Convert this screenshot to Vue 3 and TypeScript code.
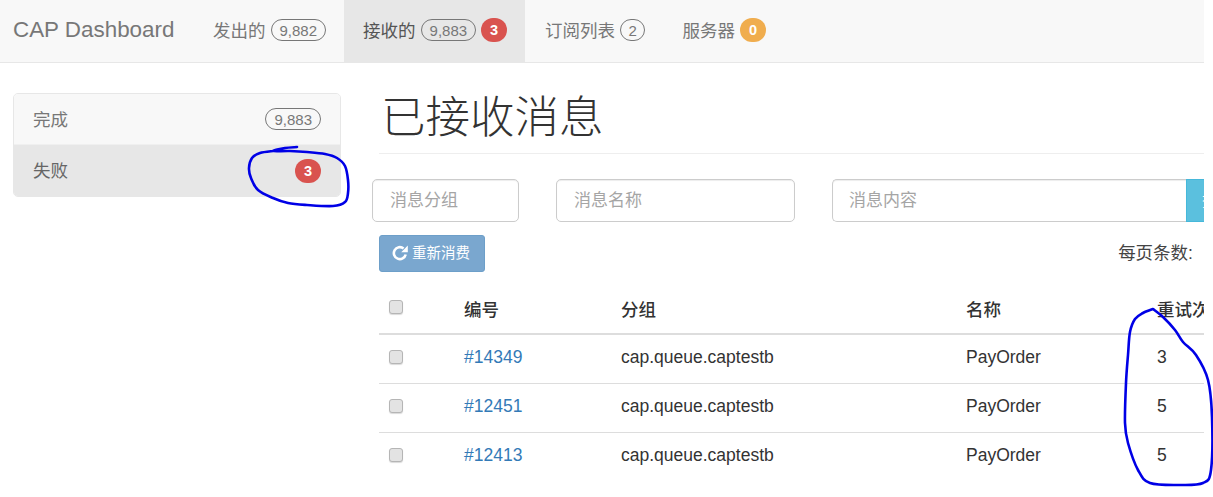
<script setup lang="ts">
interface Row { id: string; group: string; name: string; retries: number }
type Point = [number, number]

const rows: Row[] = [
  { id: '#14349', group: 'cap.queue.captestb', name: 'PayOrder', retries: 3 },
  { id: '#12451', group: 'cap.queue.captestb', name: 'PayOrder', retries: 5 },
  { id: '#12413', group: 'cap.queue.captestb', name: 'PayOrder', retries: 5 },
]

// Catmull-Rom through the sampled points of a hand-drawn stroke
function smooth(p: Point[]): string {
  let d = `M${p[0][0]} ${p[0][1]}`
  for (let i = 0; i < p.length - 1; i++) {
    const a = p[Math.max(i - 1, 0)]
    const b = p[i]
    const c = p[i + 1]
    const e = p[Math.min(i + 2, p.length - 1)]
    const x1 = (b[0] + (c[0] - a[0]) / 6).toFixed(1)
    const y1 = (b[1] + (c[1] - a[1]) / 6).toFixed(1)
    const x2 = (c[0] - (e[0] - b[0]) / 6).toFixed(1)
    const y2 = (c[1] - (e[1] - b[1]) / 6).toFixed(1)
    d += ` C${x1} ${y1} ${x2} ${y2} ${c[0]} ${c[1]}`
  }
  return d
}

const sideLoop = smooth([
  [297, 147], [285, 148], [273, 151], [290, 151], [307, 152], [325, 154], [337, 158], [345, 166],
  [348, 180], [348, 193], [345, 202], [333, 206], [307, 205], [288, 203], [273, 198], [258, 190],
  [251, 178], [249, 168], [252, 158], [260, 153], [273, 151],
])
const retryLoop = smooth([
  [1153, 309], [1143, 313], [1135, 319], [1130, 332], [1128, 355], [1126, 383], [1125, 423],
  [1128, 443], [1138, 470], [1150, 483], [1180, 485], [1203, 483], [1211, 470], [1212, 417],
  [1208, 380], [1196, 355], [1183, 342], [1175, 330], [1163, 317], [1153, 309],
])
</script>

<template>
  <div class="page">
    <nav class="navbar">
      <span class="brand">CAP Dashboard</span>
      <a class="nav-item first"><span class="label">发出的</span><span class="pill">9,882</span></a>
      <a class="nav-item active"><span class="label">接收的</span><span class="pill">9,883</span><span class="badge red">3</span></a>
      <a class="nav-item subs"><span class="label">订阅列表</span><span class="pill">2</span></a>
      <a class="nav-item"><span class="label">服务器</span><span class="badge orange">0</span></a>
    </nav>
    <div class="body">
      <aside class="side">
        <div class="list">
          <div class="list-item"><span class="label">完成</span><span class="pill">9,883</span></div>
          <div class="list-item selected"><span class="label">失败</span><span class="badge red">3</span></div>
        </div>
      </aside>
      <main class="main">
        <h1 class="title">已接收消息</h1>
        <div class="filters">
          <input class="input group" placeholder="消息分组" />
          <input class="input name" placeholder="消息名称" />
          <input class="input content" placeholder="消息内容" />
          <button class="search" type="button">查询</button>
        </div>
        <div class="toolbar">
          <button class="retry" type="button">
            <svg width="16" height="16" viewBox="0 0 16 16" aria-hidden="true">
              <path d="M13.7 9.5A6 6 0 1 1 11.6 3.4" fill="none" stroke="#fff" stroke-width="2.6" />
              <path d="M15.8 .6v6.6H9.2z" fill="#fff" />
            </svg>
            <span class="retry-text">重新消费</span>
          </button>
          <span class="per-page">每页条数:</span>
        </div>
        <table class="table">
          <thead>
            <tr>
              <th class="c-check"><span class="check head"></span></th>
              <th class="c-id">编号</th>
              <th class="c-group">分组</th>
              <th class="c-name">名称</th>
              <th class="c-retry">重试次数</th>
            </tr>
          </thead>
          <tbody>
            <tr v-for="row in rows" :key="row.id">
              <td class="c-check"><span class="check"></span></td>
              <td class="c-id"><a class="link">{{ row.id }}</a></td>
              <td class="c-group">{{ row.group }}</td>
              <td class="c-name">{{ row.name }}</td>
              <td class="c-retry">{{ row.retries }}</td>
            </tr>
          </tbody>
        </table>
      </main>
    </div>
    <svg class="ink" width="1213" height="497" viewBox="0 0 1213 497" aria-hidden="true">
      <path :d="sideLoop" />
      <path :d="retryLoop" />
    </svg>
  </div>
</template>

<style>
html, body { margin: 0; background: #fff; }
</style>

<style scoped>
.page {
  position: relative;
  width: 1213px;
  height: 497px;
  overflow: hidden;
  font-family: "Liberation Sans", "Noto Sans CJK SC", sans-serif;
  font-size: 17.5px;
  color: #333;
}
.label { margin-bottom: 2px; }
.navbar {
  width: 1204px;
  height: 62px;
  display: flex;
  align-items: stretch;
  background: #f8f8f8;
  border-bottom: 1px solid #e7e7e7;
}
.brand {
  width: 185px;
  padding-left: 13px;
  box-sizing: border-box;
  line-height: 60px;
  font-size: 22.4px;
  color: #777;
  white-space: nowrap;
}
.nav-item {
  display: flex;
  align-items: center;
  padding: 0 19px 2px;
  color: #777;
  white-space: nowrap;
}
.nav-item.first { padding-left: 28px; padding-right: 18px; }
.nav-item.active { background: #e7e7e7; color: #555; padding-right: 18px; }
.nav-item.subs { padding-left: 20px; padding-right: 18px; }
.pill {
  display: inline-block;
  margin-left: 5px;
  padding: 0 8px;
  height: 22px;
  line-height: 21px;
  box-sizing: border-box;
  border: 1px solid #777;
  border-radius: 12px;
  font-size: 15px;
  color: #777;
  background: transparent;
}
.subs .pill { padding: 0 7.5px; }
.badge {
  display: inline-block;
  margin-left: 5px;
  min-width: 26px;
  height: 24px;
  line-height: 24px;
  border-radius: 12px;
  text-align: center;
  font-size: 14.5px;
  font-weight: 700;
  color: #fff;
}
.red { background: #d9534f; }
.orange { background: #f0ad4e; }
.body { display: flex; width: 1204px; }
.side { width: 379px; flex: none; box-sizing: border-box; padding: 30px 38px 0 13px; }
.list {
  border: 1px solid #e7e7e7;
  border-radius: 5px;
  overflow: hidden;
}
.list-item {
  display: flex;
  align-items: center;
  justify-content: space-between;
  height: 50px;
  padding: 0 19px;
  background: #f8f8f8;
  color: #777;
}
.list-item + .list-item { border-top: 1px solid #f0f0f0; height: 51px; }
.list-item.selected { background: #e7e7e7; color: #666; }
.main { flex: 1; min-width: 0; }
.title {
  margin: 24px 0 0;
  padding: 0 0 13px 2px;
  height: 53px;
  line-height: 53px;
  font-family: "Noto Sans CJK SC", sans-serif;
  font-size: 44.5px;
  font-weight: 300;
  color: #333;
  border-bottom: 1px solid #eee;
}
.filters {
  display: flex;
  margin: 25px 0 0 -7px;
  height: 43px;
}
.input {
  box-sizing: border-box;
  height: 43px;
  padding: 0 17px;
  border: 1px solid #ccc;
  border-radius: 5px;
  font: inherit;
  font-size: 17px;
  color: #555;
  box-shadow: inset 0 1px 1px rgba(0, 0, 0, .075);
  outline: none;
}
.input::placeholder { color: #a5a5a5; opacity: 1; }
.group { width: 147px; margin-right: 37px; }
.name { width: 239px; margin-right: 37px; }
.content { flex: 1; min-width: 0; padding-left: 16px; border-radius: 5px 0 0 5px; border-right: 0; }
.search {
  width: 18px;
  flex: none;
  box-sizing: border-box;
  overflow: hidden;
  border: 1px solid #46b8da;
  border-right: 0;
  padding: 0 0 0 15px;
  background: #5bc0de;
  color: #fff;
  font: inherit;
  font-size: 15px;
  text-align: left;
  white-space: nowrap;
}
.toolbar {
  display: flex;
  align-items: center;
  justify-content: space-between;
  margin-top: 13px;
  height: 37px;
  padding-right: 11px;
}
.retry {
  display: flex;
  align-items: center;
  gap: 4px;
  height: 37px;
  width: 106px;
  padding: 0 0 2px 12px;
  box-sizing: border-box;
  border: 1px solid #6d9fc9;
  border-radius: 3px;
  background: #7aa7cf;
  color: #fff;
  font: inherit;
  font-size: 14.5px;
}
.retry-text { margin-bottom: 2px; }
.per-page { color: #444; margin-bottom: 4px; }
.table {
  width: 825px;
  margin-top: 13px;
  border-collapse: collapse;
  table-layout: fixed;
}
th {
  height: 49px;
  padding: 0 0 2px;
  box-sizing: border-box;
  text-align: left;
  font-family: "Noto Sans CJK SC", sans-serif;
  font-size: 17.5px;
  font-weight: 500;
  color: #333;
  border-bottom: 2px solid #ddd;
  white-space: nowrap;
  overflow: hidden;
}
td {
  height: 49px;
  padding: 0 0 3px;
  box-sizing: border-box;
  border-top: 1px solid #ddd;
}
tbody tr:first-child td { border-top: 0; }
.c-check { width: 85px; padding-left: 10px; box-sizing: border-box; }
.c-id { width: 157px; }
.c-group { width: 345px; }
.c-name { width: 191px; }
.c-retry { width: 47px; }
.check {
  display: block;
  width: 14px;
  height: 14px;
  box-sizing: border-box;
  border: 1px solid #b5b5b5;
  border-radius: 3px;
  background: #e3e3e3;
  box-shadow: 0 1px 1px rgba(0, 0, 0, .15);
}
.check.head { margin-top: -3px; }
.link { color: #337ab7; }
.ink {
  position: absolute;
  inset: 0;
  pointer-events: none;
}
.ink path {
  fill: none;
  stroke: #0000e6;
  stroke-width: 2.6;
  stroke-linecap: round;
  stroke-linejoin: round;
}
</style>
